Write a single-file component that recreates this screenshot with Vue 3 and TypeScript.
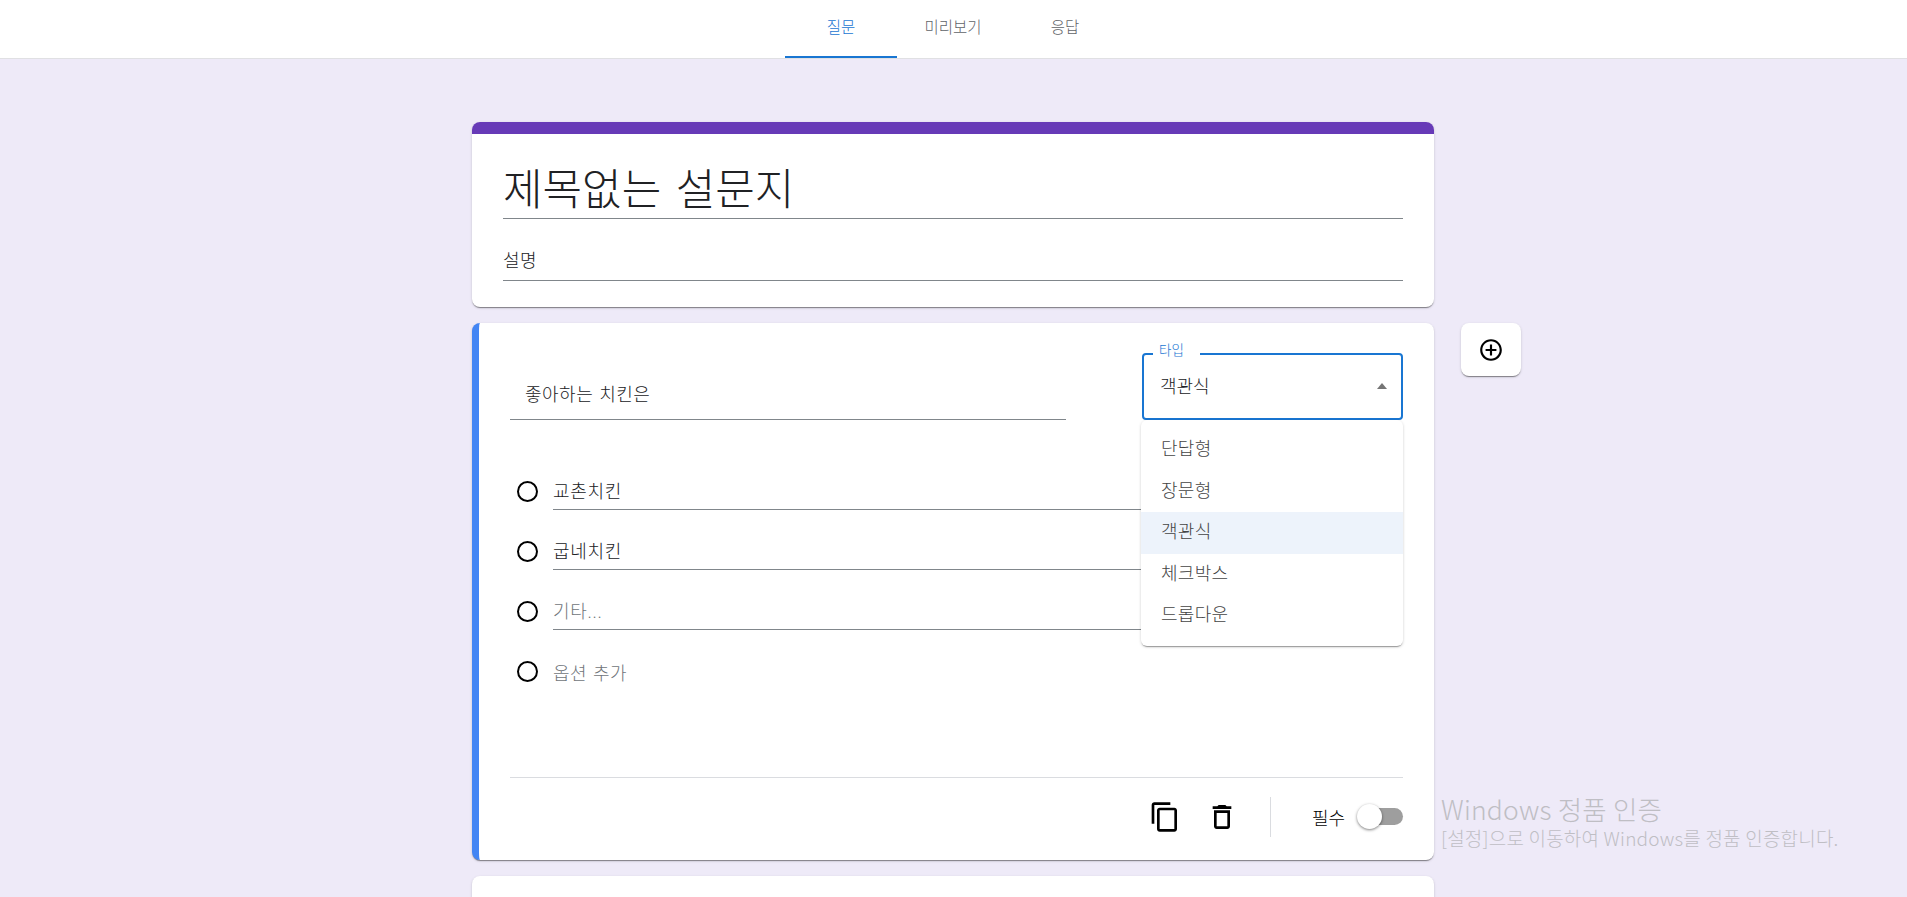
<template>
  <div class="page">
    <nav class="tabs">
      <div class="tab active">질문</div>
      <div class="tab">미리보기</div>
      <div class="tab">응답</div>
    </nav>
    <main class="content">
      <div class="column">
        <section class="card title-card">
          <div class="title-bar"></div>
          <div class="title-body">
            <div class="title-input">제목없는 설문지</div>
            <div class="desc-input">설명</div>
          </div>
        </section>
        <section class="card question-card">
          <div class="question-top">
            <div class="question-input">좋아하는 치킨은</div>
            <div class="type-select">
              <span class="type-legend">타입</span>
              <span>객관식</span>
              <span class="caret"></span>
              <ul class="type-menu">
                <li v-for="t in types" :key="t" :class="{ selected: t === '객관식' }">{{ t }}</li>
              </ul>
            </div>
          </div>
          <div class="options">
            <div v-for="o in options" :key="o.label" class="option">
              <span class="radio"></span>
              <div class="option-input" :class="{ muted: o.muted }">{{ o.label }}</div>
            </div>
            <div class="option">
              <span class="radio"></span>
              <div class="option-add">옵션 추가</div>
            </div>
          </div>
          <div class="question-foot">
            <button type="button" class="icon-btn">
              <svg width="32" height="32" viewBox="0 0 24 24"><path d="M16 1H4c-1.100 0-2 .9-2 2v14h2V3h12V1zm3 4H8c-1.100 0-2 .9-2 2v14c0 1.100.9 2 2 2h11c1.100 0 2-.9 2-2V7c0-1.100-.9-2-2-2zm0 16H8V7h11v14z" /></svg>
            </button>
            <button type="button" class="icon-btn">
              <svg width="32" height="32" viewBox="0 0 24 24"><path d="M16 9v10H8V9h8m-1.500-6h-5l-1 1H5v2h14V4h-3.500l-1-1zM18 7H6v12c0 1.100.9 2 2 2h8c1.100 0 2-.9 2-2V7z" /></svg>
            </button>
            <div class="foot-divider"></div>
            <span class="required">필수</span>
            <span class="switch"><span class="switch-thumb"></span></span>
          </div>
        </section>
        <section class="card next-card"></section>
      </div>
      <div class="side">
        <button type="button" class="add-btn">
          <svg width="26" height="26" viewBox="0 0 24 24"><path d="M13 7h-2v4H7v2h4v4h2v-4h4v-2h-4V7zm-1-5C6.480 2 2 6.480 2 12s4.480 10 10 10 10-4.480 10-10S17.520 2 12 2zm0 18c-4.410 0-8-3.590-8-8s3.590-8 8-8 8 3.590 8 8-3.590 8-8 8z" /></svg>
        </button>
      </div>
    </main>
    <div class="watermark">
      <div class="wm-title">Windows 정품 인증</div>
      <div class="wm-sub">[설정]으로 이동하여 Windows를 정품 인증합니다.</div>
    </div>
  </div>
</template>

<script setup lang="ts">
const types: string[] = ['단답형', '장문형', '객관식', '체크박스', '드롭다운']

const options: { label: string; muted?: boolean }[] = [
  { label: '교촌치킨' },
  { label: '굽네치킨' },
  { label: '기타...', muted: true }
]
</script>

<style>
html,
body {
  margin: 0;
  height: 100%;
  overflow: hidden;
  background: #eeeaf8;
}
</style>

<style scoped>
.page {
  height: 897px;
  overflow: hidden;
  position: relative;
  background: #eeeaf8;
  font-family: Roboto, 'Noto Sans CJK KR', sans-serif;
  font-weight: 300;
  color: #202124;
}
.tabs {
  height: 59px;
  background: #fff;
  display: flex;
  justify-content: center;
  border-bottom: 1px solid #e0e0e3;
  box-sizing: border-box;
  padding-right: 1px;
}
.tab {
  width: 112px;
  height: 58px;
  line-height: 56px;
  text-align: center;
  font-size: 15.500px;
  color: #5f6368;
  box-sizing: border-box;
}
.tab.active {
  color: #1976d2;
  border-bottom: 2px solid #1976d2;
}
.content {
  display: flex;
  justify-content: center;
  padding: 63px 1px 0 0;
}
.column {
  width: 962px;
  display: flex;
  flex-direction: column;
  gap: 16px;
}
.card {
  background: #fff;
  border-radius: 8px;
  box-shadow: 0 2px 1px -1px rgba(0, 0, 0, 0.3), 0 1px 1px 0 rgba(0, 0, 0, 0.14), 0 1px 3px 0 rgba(0, 0, 0, 0.14);
}
.title-card {
  height: 185px;
}
.title-bar {
  height: 12px;
  background: #673ab7;
  border-radius: 8px 8px 0 0;
}
.title-body {
  padding: 28px 31px 0;
}
.title-input {
  font-size: 43px;
  line-height: 56px;
  word-spacing: 4px;
  border-bottom: 1px solid #80868b;
}
.desc-input {
  font-size: 18px;
  line-height: 32px;
  letter-spacing: 0.500px;
  margin-top: 26px;
  padding-bottom: 3px;
  border-bottom: 1px solid #80868b;
}
.question-card {
  height: 537px;
  border-left: 7px solid #4285f4;
  box-sizing: border-box;
  padding: 30px 31px 0;
  display: flex;
  flex-direction: column;
}
.question-top {
  display: flex;
  justify-content: space-between;
  align-items: flex-end;
}
.question-input {
  width: 556px;
  padding: 2px 0 0 15px;
  box-sizing: border-box;
  font-size: 18px;
  line-height: 48px;
  letter-spacing: 0.500px;
  word-spacing: 1px;
  border-bottom: 1px solid #80868b;
}
.type-select {
  position: relative;
  width: 261px;
  height: 67px;
  box-sizing: border-box;
  border: 2px solid #1976d2;
  border-radius: 4px;
  padding: 0 0 3px 16px;
  display: flex;
  align-items: center;
  font-size: 18px;
}
.type-legend {
  position: absolute;
  top: -11px;
  left: 9px;
  padding: 0 16px 0 6px;
  background: #fff;
  font-size: 13.500px;
  line-height: 13px;
  color: #1976d2;
}
.caret {
  position: absolute;
  right: 14px;
  top: 28px;
  border-left: 5.500px solid transparent;
  border-right: 5.500px solid transparent;
  border-bottom: 6px solid #757575;
}
.type-menu {
  position: absolute;
  top: 65px;
  left: -3px;
  width: 262px;
  margin: 0;
  padding: 9px 0;
  list-style: none;
  background: #fff;
  border-radius: 6px;
  color: #444;
  letter-spacing: 0.300px;
  box-shadow: 0 2px 1px -1px rgba(0, 0, 0, 0.3), 0 1px 3px 0 rgba(0, 0, 0, 0.2);
  z-index: 2;
}
.type-menu li {
  height: 41.500px;
  line-height: 39px;
  padding-left: 20px;
}
.type-menu li.selected {
  background: #edf3fb;
}
.options {
  margin-top: 53px;
  display: flex;
  flex-direction: column;
  gap: 23px;
}
.option {
  display: flex;
  align-items: center;
  height: 37px;
  padding-left: 7px;
}
.radio {
  width: 21px;
  height: 21px;
  box-sizing: border-box;
  border: 2px solid #000;
  border-radius: 50%;
  margin-right: 15px;
  flex: none;
}
.option-input {
  width: 588px;
  box-sizing: border-box;
  font-size: 18px;
  line-height: 38px;
  height: 37px;
  letter-spacing: 0.700px;
  border-bottom: 1px solid #80868b;
}
.option-input.muted,
.option-add {
  color: #70757a;
  font-size: 18px;
}
.option-add {
  letter-spacing: 0.500px;
  word-spacing: 1px;
}
.question-foot {
  margin-top: auto;
  height: 83px;
  box-sizing: border-box;
  padding-bottom: 5px;
  border-top: 1px solid #dadce0;
  display: flex;
  align-items: center;
  justify-content: flex-end;
}
.icon-btn {
  width: 57px;
  height: 48px;
  border: none;
  background: none;
  padding: 0;
  display: flex;
  align-items: center;
  justify-content: center;
}
.foot-divider {
  width: 1px;
  height: 40px;
  background: #dadce0;
  margin: 0 41px 0 19px;
}
.required {
  font-size: 18px;
  color: #000;
  margin-right: 18px;
}
.switch {
  position: relative;
  width: 40px;
  height: 17px;
  background: #9e9e9e;
  border-radius: 9px;
}
.switch-thumb {
  position: absolute;
  left: -6px;
  top: -4px;
  width: 25px;
  height: 25px;
  background: #fff;
  border-radius: 50%;
  box-shadow: 0 1px 3px rgba(0, 0, 0, 0.5);
}
.next-card {
  height: 100px;
}
.side {
  width: 60px;
  margin-left: 27px;
  padding-top: 201px;
  margin-right: -87px;
}
.add-btn {
  width: 60px;
  height: 53px;
  background: #fff;
  border: none;
  border-radius: 8px;
  box-shadow: 0 2px 1px -1px rgba(0, 0, 0, 0.3), 0 1px 1px 0 rgba(0, 0, 0, 0.14), 0 1px 3px 0 rgba(0, 0, 0, 0.14);
  display: flex;
  align-items: center;
  justify-content: center;
  padding: 0;
}
.watermark {
  position: absolute;
  left: 1441px;
  top: 792px;
  color: #bfbec4;
  font-family: 'Noto Sans CJK KR', sans-serif;
  font-weight: 300;
}
.wm-title {
  font-size: 26.500px;
  line-height: 33px;
  letter-spacing: 0.200px;
}
.wm-sub {
  font-size: 19px;
  line-height: 26px;
  letter-spacing: 0.200px;
}
</style>
